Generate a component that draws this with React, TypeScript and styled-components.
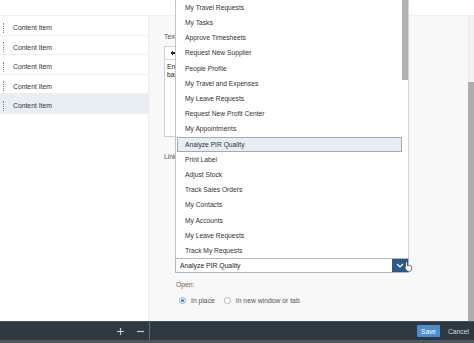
import * as React from "react";
import styled, { createGlobalStyle } from "styled-components";

const GlobalStyle = createGlobalStyle`
  html, body { margin: 0; padding: 0; background: #fff; }
  body { font-family: "Liberation Sans", Arial, Helvetica, sans-serif; }
  #root { width: 474px; height: 343px; overflow: hidden; }
`;

const contentItems = ["Content Item", "Content Item", "Content Item", "Content Item", "Content Item"];

const appItems = [
  "My Travel Requests",
  "My Tasks",
  "Approve Timesheets",
  "Request New Supplier",
  "People Profile",
  "My Travel and Expenses",
  "My Leave Requests",
  "Request New Profit Center",
  "My Appointments",
  "Analyze PIR Quality",
  "Print Label",
  "Adjust Stock",
  "Track Sales Orders",
  "My Contacts",
  "My Accounts",
  "My Leave Requests",
  "Track My Requests",
];

const ROW = 15.2;

const Page = styled.div`
  width: 474px;
  height: 343px;
  display: grid;
  grid-template-rows: 16px 305px 19px 3px;
`;

const Header = styled.div`
  background: #fff;
  border-bottom: 1px solid #f0f0f0;
  box-sizing: border-box;
`;

const Body = styled.div`
  display: grid;
  grid-template-columns: 149px 1fr 6px;
  background: #f8f8f8;
`;

const LeftPanel = styled.div`
  background: #fff;
  border-right: 1px solid #ededed;
`;

const ItemRow = styled.div<{ selected: boolean }>`
  height: 19.5px;
  box-sizing: border-box;
  display: flex;
  align-items: center;
  gap: 8px;
  padding: 5px 0 0 3px;
  border-bottom: 1px solid #efefef;
  background: ${p => (p.selected ? "#e9eef5" : "#fff")};
  font-size: 6.8px;
  color: #333;
`;

const Handle = styled.span`
  width: 1px;
  height: 10px;
  border-left: 1px dotted #6f8aa8;
`;

const MainPanel = styled.div`
  position: relative;
  padding: 17px 0 0 15px;
  display: flex;
  flex-direction: column;
  align-items: flex-start;
`;

const FieldLabel = styled.div<{ top: number }>`
  margin-top: ${p => p.top}px;
  font-size: 6.8px;
  line-height: 8px;
  color: #555;
`;

const Editor = styled.div`
  margin-top: 5px;
  width: 235px;
  height: 91px;
  box-sizing: border-box;
  background: #fff;
  border: 1px solid #cfcfcf;
  display: flex;
  flex-direction: column;
`;

const EditorToolbar = styled.div`
  height: 12px;
  border-bottom: 1px solid #dcdcdc;
  display: flex;
  align-items: center;
  padding-left: 5px;
`;

const EditorText = styled.div`
  width: 9px;
  overflow: hidden;
  white-space: nowrap;
  padding: 3px 2px 0;
  font-size: 6.8px;
  line-height: 7.5px;
  color: #222;
`;

const LinkSection = styled.div`
  margin-left: 11px;
  display: flex;
  flex-direction: column;
  align-items: flex-start;
`;

const SelectWrap = styled.div`
  position: relative;
  margin-top: 97px;
  width: 234px;
`;

const SelectBox = styled.div`
  height: 15px;
  box-sizing: border-box;
  border: 1px solid #a8b8c9;
  background: #fff;
  display: flex;
  align-items: stretch;
`;

const SelectValue = styled.div`
  flex: 1;
  display: flex;
  align-items: center;
  padding-left: 4px;
  font-size: 6.8px;
  color: #1c1c1c;
`;

const SelectButton = styled.div`
  width: 16px;
  background: #2c5884;
  display: flex;
  align-items: center;
  justify-content: center;
`;

const DropList = styled.div`
  position: absolute;
  left: 0;
  bottom: 100%;
  width: 234px;
  box-sizing: border-box;
  background: #fff;
  border-left: 1px solid #c4c4c4;
  border-right: 1px solid #d6d6d6;
  padding-right: 6px;
  z-index: 5;
`;

const DropItem = styled.div<{ active: boolean }>`
  height: ${ROW}px;
  box-sizing: border-box;
  margin-left: 1px;
  display: flex;
  align-items: center;
  padding-left: 7px;
  font-size: 6.7px;
  color: #333;
  background: ${p => (p.active ? "#e7edf5" : "transparent")};
  border: 1px solid ${p => (p.active ? "#9eabba" : "transparent")};
`;

const DropThumb = styled.div`
  position: absolute;
  right: 0;
  top: 0;
  width: 6px;
  height: 80px;
  background: #b2b2b2;
`;

const Cursor = styled.svg`
  position: absolute;
  right: -4px;
  top: 3px;
  z-index: 6;
`;

const OpenLabel = styled.div`
  margin-top: 8px;
  margin-left: 1px;
  font-size: 6.8px;
  line-height: 8px;
  color: #666;
`;

const RadioRow = styled.div`
  margin-top: 8px;
  margin-left: 4px;
  display: flex;
  align-items: center;
  gap: 9px;
`;

const RadioOption = styled.label`
  display: flex;
  align-items: center;
  gap: 5px;
  font-size: 6.8px;
  color: #555;
`;

const RadioDot = styled.span<{ checked: boolean }>`
  width: 7px;
  height: 7px;
  box-sizing: border-box;
  border-radius: 50%;
  border: 1px solid ${p => (p.checked ? "#8fa6c0" : "#b5b5b5")};
  background: #fff;
  display: flex;
  align-items: center;
  justify-content: center;
  &::after {
    content: "";
    width: 3px;
    height: 3px;
    border-radius: 50%;
    background: ${p => (p.checked ? "#3c78b5" : "transparent")};
  }
`;

const ScrollTrack = styled.div`
  background: #f3f3f3;
  border-left: 1px solid #ebebeb;
  box-sizing: border-box;
  padding-top: 66px;
`;

const ScrollThumb = styled.div`
  height: 100%;
  background: #adadad;
  margin-left: -1px;
`;

const BottomBar = styled.div`
  display: grid;
  grid-template-columns: 150px 1fr;
  background: #2d3843;
  border-top: 1px solid #46515c;
  box-sizing: border-box;
`;

const BarLeft = styled.div`
  display: flex;
  align-items: center;
  justify-content: flex-end;
  gap: 13px;
  padding-right: 5px;
  border-right: 1px solid #616a73;
  color: #c9ced3;
  font-size: 11px;
`;

const BarRight = styled.div`
  display: flex;
  align-items: center;
  justify-content: flex-end;
  gap: 7px;
  padding-right: 4px;
`;

const SaveButton = styled.div`
  width: 23px;
  height: 12px;
  background: #4a8fd1;
  border-radius: 1px;
  color: #fff;
  font-size: 6.6px;
  display: flex;
  align-items: center;
  justify-content: center;
`;

const CancelText = styled.div`
  width: 23px;
  color: #d5d9dd;
  font-size: 6.8px;
  text-align: center;
`;

const Strip = styled.div`
  background: #50565c;
`;

const ArrowIcon = () => (
  <svg width="6" height="6" viewBox="0 0 6 6">
    <path d="M0.5 3 L3 0.6 L3 2.1 L5.6 2.1 L5.6 3.9 L3 3.9 L3 5.4 Z" fill="#222" />
  </svg>
);

const Chevron = () => (
  <svg width="8" height="5" viewBox="0 0 8 5">
    <path d="M1 1 L4 4 L7 1" stroke="#fff" strokeWidth="1.2" fill="none" />
  </svg>
);

const PlusIcon = () => (
  <svg width="7" height="7" viewBox="0 0 7 7">
    <path d="M3.5 0 V7 M0 3.5 H7" stroke="#c9ced3" strokeWidth="1.2" />
  </svg>
);

const MinusIcon = () => (
  <svg width="7" height="7" viewBox="0 0 7 7">
    <path d="M0 3.5 H7" stroke="#c9ced3" strokeWidth="1.2" />
  </svg>
);

export default function App() {
  return (
    <Page>
      <GlobalStyle />
      <Header />
      <Body>
        <LeftPanel>
          {contentItems.map((t, i) => (
            <ItemRow key={i} selected={i === 4}>
              <Handle />
              {t}
            </ItemRow>
          ))}
        </LeftPanel>
        <MainPanel>
          <FieldLabel top={0}>Text</FieldLabel>
          <Editor>
            <EditorToolbar>
              <ArrowIcon />
            </EditorToolbar>
            <EditorText>
              Enter
              <br />
              based
            </EditorText>
          </Editor>
          <FieldLabel top={16}>Link</FieldLabel>
          <LinkSection>
            <SelectWrap>
              <DropList>
                {appItems.map((t, i) => (
                  <DropItem key={i} active={i === 9}>
                    {t}
                  </DropItem>
                ))}
                <DropThumb />
              </DropList>
              <SelectBox>
                <SelectValue>Analyze PIR Quality</SelectValue>
                <SelectButton>
                  <Chevron />
                </SelectButton>
              </SelectBox>
              <Cursor width="9" height="11" viewBox="0 0 9 11">
                <path
                  d="M2.5 0.8 C3.1 0.8 3.4 1.2 3.4 1.7 L3.4 4.6 C3.8 4.2 4.6 4.3 4.8 4.8 C5.2 4.4 6 4.5 6.2 5.1 C6.6 4.8 7.5 5 7.6 5.7 L7.6 8 C7.6 9.4 6.7 10.3 5.4 10.3 L4.4 10.3 C3.5 10.3 2.9 9.9 2.4 9.2 L0.8 7 C0.5 6.5 0.7 6 1.2 5.9 C1.5 5.9 1.8 6.1 1.6 6.2 L1.6 1.7 C1.6 1.2 1.9 0.8 2.5 0.8 Z"
                  fill="#fff"
                  stroke="#333"
                  strokeWidth="0.7"
                />
              </Cursor>
            </SelectWrap>
            <OpenLabel>Open:</OpenLabel>
            <RadioRow>
              <RadioOption>
                <RadioDot checked />
                In place
              </RadioOption>
              <RadioOption>
                <RadioDot checked={false} />
                In new window or tab
              </RadioOption>
            </RadioRow>
          </LinkSection>
        </MainPanel>
        <ScrollTrack>
          <ScrollThumb />
        </ScrollTrack>
      </Body>
      <BottomBar>
        <BarLeft>
          <PlusIcon />
          <MinusIcon />
        </BarLeft>
        <BarRight>
          <SaveButton>Save</SaveButton>
          <CancelText>Cancel</CancelText>
        </BarRight>
      </BottomBar>
      <Strip />
    </Page>
  );
}
